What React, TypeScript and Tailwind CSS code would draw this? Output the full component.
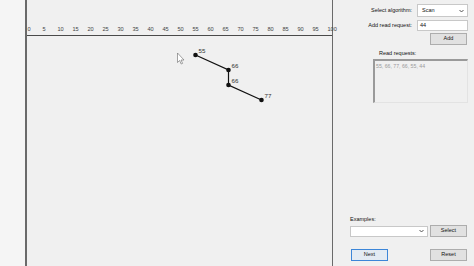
import React from "react";

const ticks = Array.from({ length: 21 }, (_, i) => i * 5);
const pts = [
  { v: 55, y: 55 },
  { v: 66, y: 70 },
  { v: 66, y: 85 },
  { v: 77, y: 100 },
];
const px = (v: number) => 3.5 + 3 * v;

function Btn({ children, focus }: { children: React.ReactNode; focus?: boolean }) {
  return (
    <div
      className={
        "w-[37px] h-[12px] flex items-center justify-center border text-[5.5px] leading-none text-[#111] " +
        (focus ? "border-[#3c86d8] bg-[#e3ebf3]" : "border-[#adadad] bg-[#e1e1e1]")
      }
    >
      {children}
    </div>
  );
}

function Chevron() {
  return (
    <svg width="5" height="4" viewBox="0 0 5 4">
      <path d="M0.5 1 L2.5 3 L4.5 1" stroke="#444" strokeWidth="0.9" fill="none" />
    </svg>
  );
}

export default function App() {
  return (
    <div
      className="w-[474px] h-[266px] flex bg-[#f0f0f0] overflow-hidden"
      style={{ fontFamily: '"Liberation Sans", Arial, sans-serif' }}
    >
      <div className="w-[25px] h-full bg-[#f5f5f5]" />
      <div className="w-[1.5px] h-full bg-[#6a6a6a]" />
      <div className="relative w-[305px] h-full">
        <svg className="absolute inset-0 overflow-visible" width="305" height="266" viewBox="0 0 305 266">
          <line x1="0" y1="35.5" x2="305" y2="35.5" stroke="#4a4a4a" strokeWidth="1" />
          {ticks.map((t) => (
            <text key={t} x={t * 3 + 0.5} y="31" fontSize="5.6" fill="#444" fontFamily='"Liberation Sans", Arial, sans-serif'>
              {t}
            </text>
          ))}
          <polyline
            points={pts.map((p) => `${px(p.v)},${p.y}`).join(" ")}
            fill="none"
            stroke="#111"
            strokeWidth="1.2"
          />
          {pts.map((p, i) => (
            <g key={i}>
              <circle cx={px(p.v)} cy={p.y} r="2.3" fill="#111" />
              <text x={px(p.v) + 3} y={p.y - 2.5} fontSize="6.2" fill="#333" fontFamily='"Liberation Sans", Arial, sans-serif'>
                {p.v}
              </text>
            </g>
          ))}
          <path
            d="M150.5 53 L150.5 62.5 L152.6 60.5 L154.2 64 L155.6 63.4 L154 60 L157 60 Z"
            fill="#fff"
            stroke="#666"
            strokeWidth="0.6"
          />
        </svg>
      </div>
      <div className="w-[1.5px] h-full bg-[#6a6a6a]" />
      <div className="flex-1 flex flex-col text-[5.5px] leading-none text-[#111]">
        <div className="flex justify-end items-center pr-[6px] pt-[4px] gap-[5px]">
          <span>Select algorithm:</span>
          <div className="w-[51px] h-[13px] bg-white border border-[#c8c8c8] flex items-center justify-between pl-[4px] pr-[3px]">
            <span>Scan</span>
            <Chevron />
          </div>
        </div>
        <div className="flex justify-end items-center pr-[6px] pt-[3px] gap-[5px]">
          <span>Add read request:</span>
          <div className="w-[51px] h-[11px] bg-white border border-[#c8c8c8] flex items-center pl-[2px]">
            <span>44</span>
          </div>
        </div>
        <div className="flex justify-end pr-[7px] pt-[2px]">
          <Btn>Add</Btn>
        </div>
        <div className="pl-[46px] pt-[6px]">Read requests:</div>
        <div className="ml-[40px] mt-[2px] w-[95px] h-[44px] bg-[#f0f0f0] border-t-[2px] border-l-[2px] border-t-[#9a9a9a] border-l-[#9a9a9a] border-r border-b border-r-[#e3e3e3] border-b-[#e3e3e3] pl-[1px] pt-[3px] text-[#9a9a9a] text-[5.2px]">
          55, 66, 77, 66, 55, 44
        </div>
        <div className="flex-1" />
        <div className="pl-[17px]">Examples:</div>
        <div className="flex items-center pl-[17px] pr-[7px] pt-[3px] justify-between">
          <div className="w-[78px] h-[11px] bg-white border border-[#c8c8c8] flex items-center justify-end pr-[3px]">
            <Chevron />
          </div>
          <Btn>Select</Btn>
        </div>
        <div className="flex items-center justify-between pl-[18px] pr-[7px] pt-[12px] pb-[5px]">
          <Btn focus>Next</Btn>
          <Btn>Reset</Btn>
        </div>
      </div>
    </div>
  );
}
